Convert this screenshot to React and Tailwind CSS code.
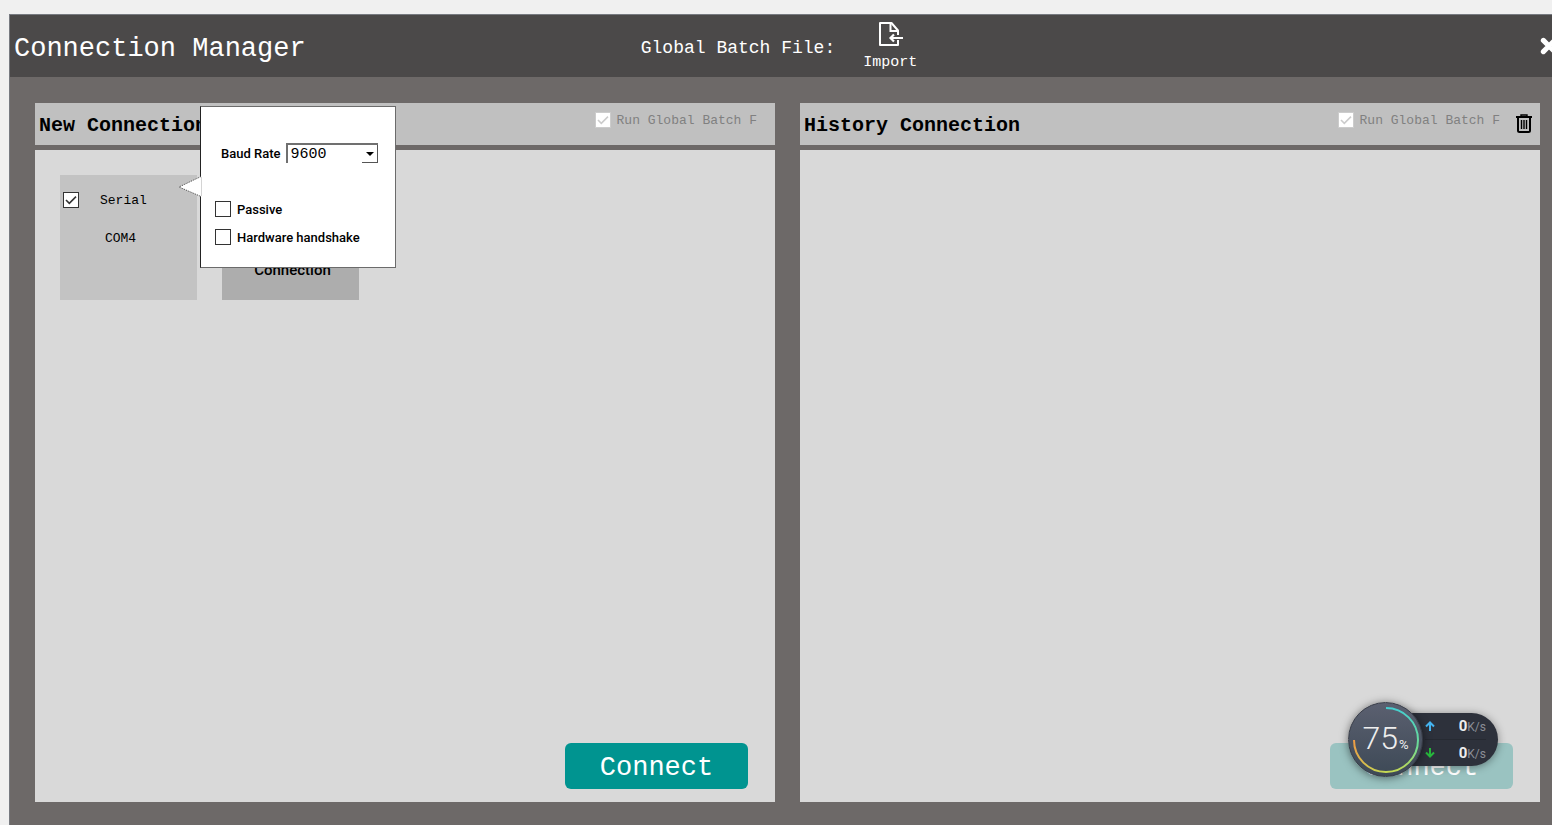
import React, { useState } from 'react';

function CheckBox({ id, disabled, defaultChecked }) {
  const [checked, setChecked] = useState(!!defaultChecked);
  return (
    <span className="grid h-4 w-4 shrink-0">
      <input
        id={id}
        type="checkbox"
        checked={checked}
        disabled={disabled}
        onChange={(e) => setChecked(e.target.checked)}
        className="col-start-1 row-start-1 h-4 w-4 appearance-none border border-[#333333] bg-white disabled:border-[#cccccc]"
      />
      {checked && (
        <svg
          viewBox="0 0 16 16"
          className={`pointer-events-none col-start-1 row-start-1 h-4 w-4 ${disabled ? 'text-[#cccccc]' : 'text-[#333333]'}`}
          fill="none"
          stroke="currentColor"
          strokeWidth="1.6"
        >
          <path d="M3 8 6.3 11.3 13 4.6" />
        </svg>
      )}
    </span>
  );
}

function ImportIcon() {
  return (
    <svg width="26" height="26" viewBox="0 0 26 26" fill="none" stroke="#fff" strokeWidth="2">
      <path d="M21 14V9.5L14.5 2H3v22h18v-5" strokeLinejoin="round" />
      <path d="M13.5 2v8H21" />
      <path d="M26 17H13.5M17 13.5 13.5 17l3.5 3.5" strokeWidth="2.2" />
    </svg>
  );
}

function TrashIcon() {
  return (
    <svg width="16" height="20" viewBox="0 0 16 20" fill="none" stroke="#000">
      <path d="M0 3h16" strokeWidth="2" />
      <path d="M5 2.5V1h6v1.5" strokeWidth="1.4" />
      <path d="M2 3v13.5Q2 18 3.5 18h9q1.5 0 1.5-1.5V3" strokeWidth="2" />
      <path d="M5.5 6v9M8 6v9M10.5 6v9" strokeWidth="1.4" />
    </svg>
  );
}

function Panel({ id, title, action, disabled, children }) {
  return (
    <section className="flex min-w-0 flex-1 flex-col gap-[5px]">
      <div className="flex h-[42px] items-center justify-between bg-[#c0c0c0] pr-2 pl-1">
        <h2 className="pt-1 text-[20px] leading-6 font-bold">{title}</h2>
        <div className="flex items-center gap-3">
          <label
            htmlFor={id}
            className={`mb-2 flex items-center gap-[6px] text-[13px] leading-4 whitespace-nowrap text-[#808080] ${action ? 'pr-1' : 'pr-[10px]'}`}
          >
            <CheckBox id={id} disabled defaultChecked />
            <span className="pt-[2px]">Run Global Batch F</span>
          </label>
          {action}
        </div>
      </div>
      <div className="relative flex flex-1 flex-col justify-between bg-[#d9d9d9] pt-[25px] pr-[27px] pb-[13px] pl-[25px]">
        <div className="flex gap-[25px]">{children}</div>
        <button
          type="button"
          disabled={disabled}
          className="h-[46px] w-[183px] self-end rounded-md bg-[#009490] pt-1 text-[27px] leading-8 text-white disabled:bg-[#9ac3c1]"
        >
          Connect
        </button>
        {disabled && <NetSpeed />}
      </div>
    </section>
  );
}

function SerialOptions() {
  return (
    <div className="absolute -top-[69px] left-[140px] z-10 w-[196px] border border-[#6b6b6b] border-l-[#222222] bg-white pt-9 pb-[22px] pl-[14px] font-[Roboto,sans-serif] text-[13px] leading-4 font-medium">
      <svg className="absolute top-[68px] -left-[23px]" width="24" height="23" viewBox="0 0 24 23">
        <path d="M24 1 1 12l23 10z" fill="#fff" />
        <path d="M23 1.5 1 12l22 9.5" fill="none" stroke="#444" strokeDasharray="1 1" />
        <path d="M23.5 2v19" stroke="#d4d4d4" />
      </svg>
      <div className="flex items-center gap-[6px] pl-[6px]">
        <label htmlFor="baud" className="pt-[2px]">
          Baud Rate
        </label>
        <div className="grid h-5 w-[92px] border-t-2 border-l-2 border-[#707070]">
          <select
            id="baud"
            defaultValue="9600"
            className="col-start-1 row-start-1 h-[18px] appearance-none bg-transparent pt-[2px] pl-[2px] font-['Liberation_Mono',monospace] text-[15px] leading-4 font-normal"
          >
            <option>9600</option>
            <option>115200</option>
          </select>
          <span className="pointer-events-none col-start-1 row-start-1 flex h-[18px] w-4 items-center justify-center justify-self-end border-r border-b border-[#555555]">
            <svg width="8" height="4" viewBox="0 0 8 4">
              <path d="M0 0h8L4 4z" />
            </svg>
          </span>
        </div>
      </div>
      <div className="mt-[38px] flex flex-col gap-3">
        <label htmlFor="passive" className="flex h-4 items-center gap-[6px]">
          <CheckBox id="passive" />
          <span className="pt-[2px]">Passive</span>
        </label>
        <label htmlFor="handshake" className="flex h-4 items-center gap-[6px]">
          <CheckBox id="handshake" />
          <span className="pt-[2px]">Hardware handshake</span>
        </label>
      </div>
    </div>
  );
}

function SpeedRow({ color, d }) {
  return (
    <div className="flex h-[26px] items-center justify-between">
      <svg width="10" height="10" viewBox="0 0 10 10" fill="none" stroke={color} strokeWidth="2">
        <path d={d} />
      </svg>
      <span className="text-[15px] leading-4 font-bold text-[#eeeeee]">
        0<small className="text-[12px] font-normal text-[#8b8e96]">K/s</small>
      </span>
    </div>
  );
}

// floating network monitor, sits over the corner of the panel
function NetSpeed() {
  return (
    <div className="absolute right-[42px] bottom-[25px] flex h-[75px] w-[150px] items-center font-[Roboto,sans-serif]">
      <div className="ml-10 flex-1 rounded-r-full bg-[#2d313b] pr-3 pl-[37px] shadow-[0_1px_8px_rgba(0,0,0,0.4)]">
        <SpeedRow color="#45b4f0" d="M5 10V2M1 5.5 5 1.5l4 4" />
        <div className="h-px bg-[#262a32]" />
        <SpeedRow color="#27b83c" d="M5 0v8M1 4.5 5 8.5l4-4" />
      </div>
      <div className="absolute left-0 grid h-[75px] w-[75px] place-items-center rounded-full border border-[#383c47] bg-linear-to-b from-[#5b6070] to-[#3d4956] shadow-[0_1px_8px_rgba(0,0,0,0.5)]">
        <svg className="col-start-1 row-start-1" width="73" height="73" viewBox="0 0 73 73" fill="none" strokeWidth="2">
          <defs>
            <linearGradient id="ringRight" x1="0" y1="0" x2="0" y2="1">
              <stop offset="0" stopColor="#45cfd0" />
              <stop offset="0.6" stopColor="#6ddb94" />
              <stop offset="1" stopColor="#c4d953" />
            </linearGradient>
            <linearGradient id="ringLeft" x1="0" y1="0" x2="1" y2="1">
              <stop offset="0" stopColor="#ed9b45" />
              <stop offset="1" stopColor="#c4d953" />
            </linearGradient>
          </defs>
          <path d="M37 5a32 32 0 0 1 0 64" stroke="url(#ringRight)" />
          <path d="M37 69A32 32 0 0 1 5 37" stroke="url(#ringLeft)" />
        </svg>
        <span className="z-10 col-start-1 row-start-1 flex items-baseline gap-px pt-1 text-[32px] leading-8 font-light text-[#eeeeee]">
          75<small className="text-[13px] font-normal">%</small>
        </span>
      </div>
    </div>
  );
}

export function ConnectionManager() {
  return (
    <div className="flex min-h-screen flex-col overflow-hidden bg-[#f0f0f0] pt-[14px] pl-[9px] font-['Liberation_Mono',monospace] text-black">
      <div className="flex flex-1 flex-col border-t border-l border-[#777a80] bg-[#6d6968]">
        <header className="grid h-[62px] grid-cols-[1fr_auto_1fr] items-center bg-[#4b4949] pr-2 pl-1 text-white">
          <h1 className="pt-[6px] text-[27px] leading-8 whitespace-nowrap">Connection Manager</h1>
          <div className="flex items-center gap-7">
            <span className="pt-[3px] text-[18px] leading-6">Global Batch File:</span>
            <button type="button" className="flex flex-col items-center gap-2 text-[15px] leading-4">
              <ImportIcon />
              Import
            </button>
          </div>
          <button type="button" aria-label="Close" className="-mr-[14px] justify-self-end">
            <svg width="18" height="18" viewBox="0 0 16 16" stroke="#fff" strokeWidth="4.5" strokeLinecap="round">
              <path d="M3 3l10 10M13 3 3 13" />
            </svg>
          </button>
        </header>

        <main className="flex flex-1 gap-[25px] pt-[26px] pr-3 pb-[23px] pl-[25px]">
          <Panel id="run-new" title="New Connection">
            <div className="relative h-[125px] w-[137px] bg-[#c3c3c3] text-[13px] leading-4">
              <label htmlFor="serial" className="flex items-center gap-[21px] pt-4 pl-[3px]">
                <CheckBox id="serial" defaultChecked />
                <span className="pt-[2px]">Serial</span>
              </label>
              <p className="mt-[22px] pr-4 text-center">COM4</p>
              <SerialOptions />
            </div>
            <button
              type="button"
              className="flex h-[125px] w-[137px] items-end justify-center bg-[#adadad] pb-5 pl-1 font-[Roboto,sans-serif] text-[15px] leading-5 font-medium"
            >
              Connection
            </button>
          </Panel>
          <Panel
            id="run-history"
            title="History Connection"
            disabled
            action={
              <button type="button" aria-label="Delete history">
                <TrashIcon />
              </button>
            }
          />
        </main>
      </div>
    </div>
  );
}

export default ConnectionManager;
